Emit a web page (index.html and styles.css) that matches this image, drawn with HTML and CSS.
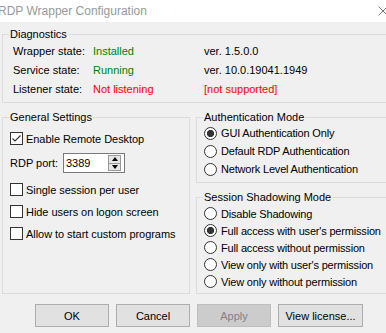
FILE: index.html
```html
<!DOCTYPE html>
<html lang="en">
<head>
  <meta charset="UTF-8" />
  <title>RDP Wrapper Configuration</title>
  <link rel="stylesheet" href="styles.css">
</head>
<body>
  <div class="window">
    <div class="titlebar">
      <span class="title">RDP Wrapper Configuration</span>
      <svg class="close" width="10" height="10" viewBox="0 0 10 10">
        <path d="M0.5 0.5 L9.5 9.5 M9.5 0.5 L0.5 9.5" stroke="#777" stroke-width="1" fill="none"/>
      </svg>
    </div>

    <div class="content">
      <fieldset class="group diag">
        <legend>Diagnostics</legend>
        <div class="diag-row">
          <span class="diag-label">Wrapper state:</span>
          <span class="diag-value ok">Installed</span>
          <span>ver. 1.5.0.0</span>
        </div>
        <div class="diag-row">
          <span class="diag-label">Service state:</span>
          <span class="diag-value ok">Running</span>
          <span>ver. 10.0.19041.1949</span>
        </div>
        <div class="diag-row">
          <span class="diag-label">Listener state:</span>
          <span class="diag-value bad">Not listening</span>
          <span class="bad">[not supported]</span>
        </div>
      </fieldset>

      <div class="lower">
        <fieldset class="group general">
          <legend>General Settings</legend>
          <div class="opt first">
            <span class="check on">
              <svg width="11" height="11" viewBox="0 0 11 11"><path d="M1.5 5.5 L4 8 L9.5 2.5" stroke="#333" stroke-width="1.1" fill="none"/></svg>
            </span>
            Enable Remote Desktop
          </div>
          <div class="port-row">
            <span>RDP port:</span>
            <div class="spinbox">
              <span>3389</span>
              <div class="spin">
                <span class="spin-btn"><i class="arrow up"></i></span>
                <span class="spin-btn"><i class="arrow down"></i></span>
              </div>
            </div>
          </div>
          <div class="opt gap8"><span class="check"></span>Single session per user</div>
          <div class="opt gap5"><span class="check"></span>Hide users on logon screen</div>
          <div class="opt gap5"><span class="check"></span>Allow to start custom programs</div>
        </fieldset>

        <div class="right-col">
          <fieldset class="group auth">
            <legend>Authentication Mode</legend>
            <div class="radio-row"><span class="radio on"></span>GUI Authentication Only</div>
            <div class="radio-row"><span class="radio"></span>Default RDP Authentication</div>
            <div class="radio-row"><span class="radio"></span>Network Level Authentication</div>
          </fieldset>

          <fieldset class="group shadow">
            <legend>Session Shadowing Mode</legend>
            <div class="radio-row"><span class="radio"></span>Disable Shadowing</div>
            <div class="radio-row"><span class="radio on"></span>Full access with user's permission</div>
            <div class="radio-row"><span class="radio"></span>Full access without permission</div>
            <div class="radio-row"><span class="radio"></span>View only with user's permission</div>
            <div class="radio-row"><span class="radio"></span>View only without permission</div>
          </fieldset>
        </div>
      </div>

      <div class="buttons">
        <button>OK</button>
        <button>Cancel</button>
        <button class="disabled" disabled>Apply</button>
        <button class="wide">View license...</button>
      </div>
    </div>
  </div>
</body>
</html>
```

FILE: styles.css
```css
body {
  margin: 0;
  padding: 0;
  background: #f0f0f0;
  overflow: hidden;
  font-family: "Liberation Sans", Arial, sans-serif;
  font-size: 11px;
  color: #000;
}

.window {
  width: 396px;
}

.titlebar {
  height: 22px;
  background: #fff;
  display: flex;
  align-items: center;
}

.title {
  margin-left: -2px;
  font-size: 12px;
  color: #999;
  flex: 1;
  white-space: nowrap;
}

.close {
  margin-right: 8px;
}

.content {
  padding-left: 2px;
}

.group {
  margin: 0;
  padding: 0 0 0 7px;
  border: 1px solid #dcdcdc;
  min-width: 0;
}

.group legend {
  padding: 0 1px;
  margin-left: -1px;
  line-height: 13px;
}

.diag {
  margin-top: 6px;
  padding-top: 1px;
  padding-bottom: 3px;
}

.diag-row {
  display: flex;
  line-height: 19px;
  padding-left: 3px;
  white-space: nowrap;
}

.diag-label {
  width: 80px;
}

.diag-value {
  width: 111px;
}

.ok {
  color: #008000;
}

.bad {
  color: #ff0000;
}

.lower {
  display: flex;
  gap: 6px;
  margin-top: 8px;
}

.general {
  width: 188px;
  box-sizing: border-box;
  padding-top: 6px;
}

.opt {
  display: flex;
  align-items: center;
  height: 17px;
  white-space: nowrap;
  letter-spacing: -0.05px;
}

.gap8 {
  margin-top: 8px;
}

.gap5 {
  margin-top: 5px;
}

.check {
  width: 13px;
  height: 13px;
  box-sizing: border-box;
  border: 1px solid #333;
  background: #fff;
  margin-right: 3px;
  display: flex;
  align-items: center;
  justify-content: center;
}

.port-row {
  display: flex;
  align-items: center;
  height: 20px;
  margin-top: 6px;
}

.port-row > span {
  width: 53px;
}

.spinbox {
  width: 62px;
  height: 20px;
  box-sizing: border-box;
  border: 1px solid #7a7a7a;
  background: #fff;
  display: flex;
  align-items: center;
  justify-content: space-between;
  padding: 0 3px 0 2px;
}

.spin {
  display: flex;
  flex-direction: column;
  width: 13px;
  height: 16px;
  box-sizing: border-box;
  border: 1px solid #9a9a9a;
  background: #e6e6e6;
}

.spin-btn {
  flex: 1;
  display: flex;
  align-items: center;
  justify-content: center;
}

.spin-btn + .spin-btn {
  border-top: 1px solid #9a9a9a;
}

.arrow {
  width: 0;
  height: 0;
  border-left: 3.5px solid transparent;
  border-right: 3.5px solid transparent;
}

.arrow.up {
  border-bottom: 4px solid #000;
}

.arrow.down {
  border-top: 4px solid #000;
}

.right-col {
  flex: 1;
  display: flex;
  flex-direction: column;
}

.auth {
  padding-bottom: 4px;
}

.auth .radio-row {
  height: 18px;
}

.shadow {
  margin-top: 8px;
  padding-top: 1px;
  padding-bottom: 3px;
}

.radio-row {
  display: flex;
  align-items: center;
  height: 17px;
  white-space: nowrap;
  letter-spacing: -0.18px;
}

.radio {
  width: 13px;
  height: 13px;
  box-sizing: border-box;
  border: 1px solid #333;
  border-radius: 50%;
  background: #fff;
  margin-right: 4px;
}

.radio.on {
  background: radial-gradient(circle, #333 0 3.3px, #fff 3.9px);
}

.buttons {
  display: flex;
  gap: 7px;
  margin-top: 10px;
  padding-left: 33px;
}

.buttons button {
  width: 74px;
  height: 23px;
  padding: 0;
  font-family: "Liberation Sans", Arial, sans-serif;
  font-size: 11px;
  color: #000;
  background: #e1e1e1;
  border: 1px solid #adadad;
}

.buttons .wide {
  width: 85px;
}

.buttons .disabled {
  background: #cccccc;
  border-color: #bfbfbf;
  color: #838383;
}
```
